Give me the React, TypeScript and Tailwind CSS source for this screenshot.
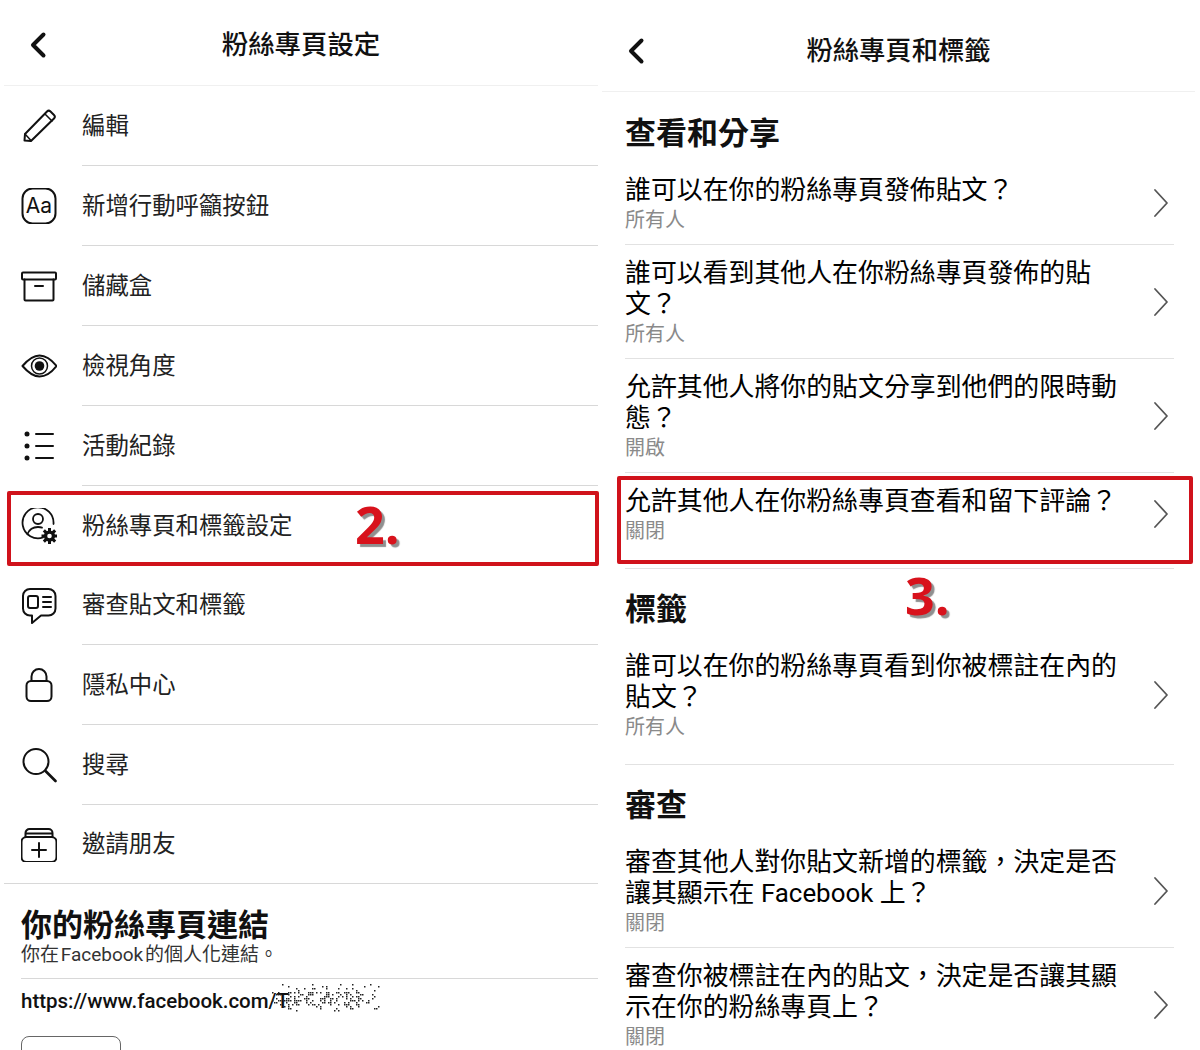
import React from 'react';

const font = { fontFamily: '"Roboto", "Noto Sans CJK TC", sans-serif' };

const I = ({ children }: { children: React.ReactNode }) => (
  <svg viewBox="0 0 36 36" className="w-[36px] h-[36px] shrink-0" fill="none" stroke="#111" strokeWidth="2" strokeLinecap="round" strokeLinejoin="round">
    {children}
  </svg>
);

const teeth = [0, 45, 90, 135];

const icons: Record<string, React.ReactNode> = {
  edit: (
    <I>
      <path d="M3.500 32.500l.5-6.500L26 3.500a2.500 2.500 0 0 1 3.500 0l3.500 3.500a2.500 2.500 0 0 1 0 3.500L10 33z" />
      <path d="M24 6l7 7M4 26l6 6.500" strokeWidth="1.500" />
    </I>
  ),
  aa: (
    <I>
      <rect x="1.500" y="0.500" width="33" height="35" rx="10" />
      <text x="18" y="25" textAnchor="middle" fontSize="21" fill="#111" stroke="none" fontFamily="Inter, sans-serif">Aa</text>
    </I>
  ),
  box: (
    <I>
      <rect x="1" y="4.500" width="34" height="7" rx="1" />
      <path d="M3.500 11.500v20a1 1 0 0 0 1 1h27a1 1 0 0 0 1-1v-20M14 18h8" />
    </I>
  ),
  eye: (
    <I>
      <path d="M1.500 18C7.500 11 12.500 7.500 18.500 7.500S30 11 35.500 18C30 25 24.500 28.500 18.500 28.500S7.500 25 1.500 18z" />
      <circle cx="18.500" cy="18" r="8" strokeWidth="1.500" />
      <circle cx="18.500" cy="18" r="4.800" fill="#111" stroke="none" />
    </I>
  ),
  list: (
    <I>
      <circle cx="6" cy="6" r="2.500" fill="#111" stroke="none" />
      <circle cx="6" cy="18" r="2.500" fill="#111" stroke="none" />
      <circle cx="6" cy="30" r="2.500" fill="#111" stroke="none" />
      <path d="M15 6h17M15 18h17M15 30h17" />
    </I>
  ),
  user: (
    <I>
      <path d="M22 29.500A15.500 15.500 0 1 1 32.500 16" strokeWidth="1.800" />
      <circle cx="17" cy="11" r="5" strokeWidth="1.800" />
      <path d="M6.500 26c2-5 6-7 10.500-7 1.500 0 3 .2 4 .6" strokeWidth="1.800" />
      <g transform="translate(28.500 28)" stroke="#111" strokeLinecap="butt">
        {teeth.map(a => (
          <path key={a} d="M0-8V8" strokeWidth="3" transform={`rotate(${a})`} />
        ))}
        <circle r="5.600" fill="#111" stroke="none" />
        <circle r="2.300" fill="#fff" stroke="none" />
      </g>
    </I>
  ),
  review: (
    <I>
      <path d="M9 1h18.500a7 7 0 0 1 7 7v12.500a7 7 0 0 1-7 7H20l-9 7.500v-7.500H9a7 7 0 0 1-7-7V8a7 7 0 0 1 7-7z" />
      <rect x="7" y="8" width="10" height="12" rx="2" />
      <path d="M22 9h8M22 14h8M22 19h8" />
    </I>
  ),
  lock: (
    <I>
      <rect x="5.500" y="14" width="25" height="20" rx="4.500" />
      <path d="M10.500 14V9.500a7.500 7.500 0 0 1 15 0V14" />
    </I>
  ),
  search: (
    <I>
      <circle cx="15" cy="14.500" r="12.500" />
      <path d="M24.500 24L34.500 34" strokeWidth="2.600" />
    </I>
  ),
  invite: (
    <I>
      <rect x="0.500" y="11" width="35" height="25" rx="5" />
      <path d="M4.500 11V7a4 4 0 0 1 4-4h19a4 4 0 0 1 4 4v4M4.500 7.500h27" />
      <path d="M18 17v14M11 24h14" />
    </I>
  ),
};

const menu = [
  { icon: 'edit', label: '編輯' },
  { icon: 'aa', label: '新增行動呼籲按鈕' },
  { icon: 'box', label: '儲藏盒' },
  { icon: 'eye', label: '檢視角度' },
  { icon: 'list', label: '活動紀錄' },
  { icon: 'user', label: '粉絲專頁和標籤設定' },
  { icon: 'review', label: '審查貼文和標籤', short: true },
  { icon: 'lock', label: '隱私中心' },
  { icon: 'search', label: '搜尋' },
  { icon: 'invite', label: '邀請朋友', last: true },
];

const Back = () => (
  <svg viewBox="0 0 20 28" className="w-[20px] h-[28px]" fill="none" stroke="#111" strokeWidth="4" strokeLinecap="round" strokeLinejoin="round">
    <path d="M15.500 3.500L5 14l10.500 10.500" />
  </svg>
);

const Chevron = () => (
  <svg viewBox="0 0 18 30" className="w-[18px] h-[30px] shrink-0" fill="none" stroke="#555" strokeWidth="1.800" strokeLinecap="round" strokeLinejoin="round">
    <path d="M3 2l12 13L3 28" />
  </svg>
);

// scrambled part of the url, stippled black on white
const noise = (() => {
  const dots: { x: number; y: number }[] = [];
  let s = 17;
  for (let y = 0; y < 28; y += 2) {
    for (let x = 0; x < 108; x += 2) {
      s = (s * 1103515245 + 12345) & 0x7fffffff;
      const r = (s >> 8) % 100;
      const inText = y > 6 && y < 22 && x < 92;
      if (r < (inText ? 34 : 10)) dots.push({ x, y });
    }
  }
  return dots;
})();

const Row = ({ lines, sub, extra }: { lines: string[]; sub: string; extra?: boolean }) => (
  <div className={`flex items-center justify-between pt-[13px] border-b border-[#e2e2e2] ${extra ? 'pb-[22px]' : 'pb-[9px]'}`}>
    <div>
      {lines.map(l => (
        <div key={l} className="text-[25.900px] leading-[31px] text-black whitespace-nowrap">{l}</div>
      ))}
      <div className="text-[20px] leading-[29px] text-[#8a8a8a]">{sub}</div>
    </div>
    <div className="mr-[4px] mb-[4px]"><Chevron /></div>
  </div>
);

const Section = ({ title, className }: { title: string; className: string }) => (
  <h2 className={`text-[31px] font-bold text-[#111] leading-[40px] ${className}`}>{title}</h2>
);

const Mark = ({ text, className }: { text: string; className: string }) => (
  <div className={`absolute font-bold text-[52px] leading-none text-[#d8121c] [text-shadow:3px_3px_1px_#8f8f8f] ${className}`} style={{ fontFamily: '"Open Sans", sans-serif' }}>
    {text}
  </div>
);

export default function App() {
  return (
    <div className="relative w-[1200px] h-[1050px] bg-white overflow-hidden flex" style={font}>
      <div className="w-[600px] h-full pl-[4px] pr-[2px] shrink-0 overflow-hidden">
        <div className="h-[86px] relative flex items-center justify-center border-b border-[#f0f0f0] pt-[7px]">
          <div className="absolute left-[24px] top-[31px]"><Back /></div>
          <div className="text-[26.400px] font-medium text-[#111]">粉絲專頁設定</div>
        </div>
        {menu.map(m => (
          <div key={m.label} className={`flex items-center pl-[17px] ${m.short || m.last ? 'h-[79px]' : 'h-[80px]'} ${m.last ? 'border-b border-[#d8d8d8]' : ''}`}>
            {icons[m.icon]}
            <div className={`ml-[25px] flex-1 h-full flex items-center pt-[2px] text-[23.400px] text-[#222] ${m.last ? '' : 'border-b border-[#d8d8d8]'}`}>
              {m.label}
            </div>
          </div>
        ))}
        <div className="pl-[17px]">
          <div className="text-[31px] font-bold text-[#111] leading-[38px] mt-[23px]">你的粉絲專頁連結</div>
          <div className="text-[19px] text-[#333] leading-[24px] mt-[-2px] pb-[11px] border-b border-[#d8d8d8] [word-spacing:-3px]">你在 Facebook 的個人化連結。</div>
          <div className="relative text-[20.500px] font-medium text-[#111] leading-[26px] mt-[9px]">
            https://www.facebook.com/T
            <svg className="absolute left-[251px] top-[-4px]" width="108" height="28">
              {noise.map((d, i) => <rect key={i} x={d.x} y={d.y} width="1.500" height="1.500" fill="#222" />)}
            </svg>
          </div>
          <div className="w-[100px] h-[20px] mt-[22px] border border-[#666] rounded-t-[8px]" />
        </div>
      </div>

      <div className="w-[600px] h-full pl-[2px] pr-[5px] shrink-0 overflow-hidden">
        <div className="h-[92px] relative flex items-center justify-center border-b border-[#f0f0f0] pt-[13px]">
          <div className="absolute left-[24px] top-[37px]"><Back /></div>
          <div className="text-[26.300px] font-medium text-[#111]">粉絲專頁和標籤</div>
        </div>
        <div className="pl-[23px] pr-[21px]">
          <Section title="查看和分享" className="mt-[22px] mb-[8px]" />
          <Row lines={['誰可以在你的粉絲專頁發佈貼文？']} sub="所有人" />
          <Row lines={['誰可以看到其他人在你粉絲專頁發佈的貼', '文？']} sub="所有人" />
          <Row lines={['允許其他人將你的貼文分享到他們的限時動', '態？']} sub="開啟" />
          <Row lines={['允許其他人在你粉絲專頁查看和留下評論？']} sub="關閉" extra />
          <Section title="標籤" className="mt-[21px] mb-[8px]" />
          <Row lines={['誰可以在你的粉絲專頁看到你被標註在內的', '貼文？']} sub="所有人" extra />
          <Section title="審查" className="mt-[21px] mb-[8px]" />
          <Row lines={['審查其他人對你貼文新增的標籤，決定是否', '讓其顯示在 Facebook 上？']} sub="關閉" />
          <Row lines={['審查你被標註在內的貼文，決定是否讓其顯', '示在你的粉絲專頁上？']} sub="關閉" />
        </div>
      </div>

      <div className="absolute left-[7px] top-[491px] w-[592px] h-[75px] border-[4px] border-[#d0121b] rounded-[2px]" />
      <div className="absolute left-[617px] top-[476px] w-[576px] h-[88px] border-[4px] border-[#d0121b] rounded-[2px]" />
      <Mark text="2." className="left-[355px] top-[498px]" />
      <Mark text="3." className="left-[905px] top-[569px]" />
    </div>
  );
}
